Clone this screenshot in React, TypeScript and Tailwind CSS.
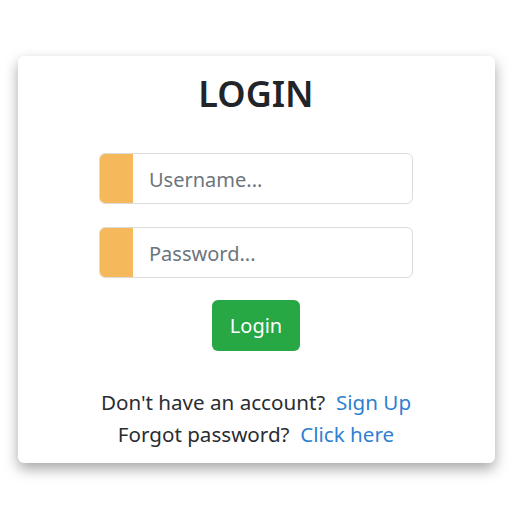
export default function App() {
  return (
    <div className="flex h-[512px] w-[512px] items-start justify-center bg-white pt-[56px] font-['Noto_Sans','Open_Sans',sans-serif] text-[#212529]">
      <div className="flex h-[407px] w-[477px] flex-col items-center rounded-md bg-white shadow-[0_6px_14px_rgba(0,0,0,0.35)]">
        <h1 className="mt-[14px] text-[36px] font-semibold leading-[48px]">LOGIN</h1>

        <div className="mt-[35px] flex w-[314px] flex-col gap-[23px]">
          <div className="flex h-[51px] overflow-hidden rounded-md border border-[#dcdcdc]">
            <span className="w-[33px] shrink-0 bg-[#f5b85a]" />
            <input
              placeholder="Username..."
              className="min-w-0 flex-1 pl-[16px] pr-[17px] pt-[2px] text-[20px] outline-none placeholder:text-[#6c757d]"
            />
          </div>
          <div className="flex h-[51px] overflow-hidden rounded-md border border-[#dcdcdc]">
            <span className="w-[33px] shrink-0 bg-[#f5b85a]" />
            <input
              type="password"
              placeholder="Password..."
              className="min-w-0 flex-1 pl-[16px] pr-[17px] pt-[2px] text-[20px] outline-none placeholder:text-[#6c757d]"
            />
          </div>
        </div>

        <button className="mt-[22px] h-[51px] w-[88px] rounded-md bg-[#28a745] text-[20px] text-white">
          Login
        </button>

        <div className="mt-[35px] flex flex-col items-center text-[20.6px] leading-[32px] text-[#2a2d31]">
          <p>
            Don't have an account?&nbsp; <a className="text-[#2f80d1]">Sign Up</a>
          </p>
          <p>
            Forgot password?&nbsp; <a className="text-[#2f80d1]">Click here</a>
          </p>
        </div>
      </div>
    </div>
  );
}
